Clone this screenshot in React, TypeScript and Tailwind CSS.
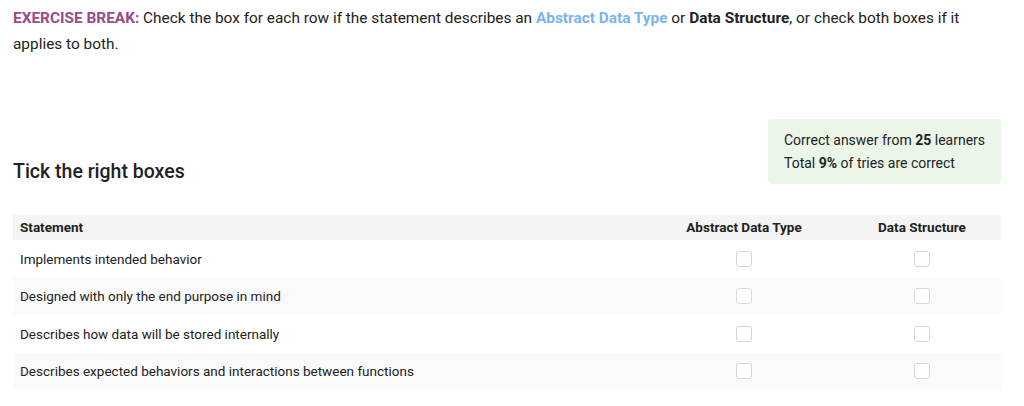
import React from "react";

const rows = [
  "Implements intended behavior",
  "Designed with only the end purpose in mind",
  "Describes how data will be stored internally",
  "Describes expected behaviors and interactions between functions",
];

function Box() {
  return <div className="w-4 h-4 rounded-[3px] border border-[#d6d6d6] bg-white" />;
}

export default function App() {
  return (
    <div className="w-[1024px] h-[406px] bg-white text-[#222] px-[13px] pt-[5px]" style={{ fontFamily: "Roboto, 'Noto Sans', sans-serif" }}>
      <p className="text-[15.4px] leading-[26px] w-[988px] pr-[20px]">
        <span className="font-bold text-[#9a4b8c]">EXERCISE BREAK:</span> Check the box for each row if the statement describes an{" "}
        <span className="font-bold text-[#7ab4f0]">Abstract Data Type</span> or <span className="font-bold">Data Structure</span>, or check both boxes if it applies to both.
      </p>
      <div className="mt-[62px] w-[988px] flex items-end justify-between">
        <h2 className="text-[19.5px] leading-[24px] font-medium">Tick the right boxes</h2>
        <div className="w-[233px] h-[65px] rounded-[4px] bg-[#ebf6e9] pl-4 pt-[10px] text-[14px] leading-[23px]">
          <div>Correct answer from <b>25</b> learners</div>
          <div>Total <b>9%</b> of tries are correct</div>
        </div>
      </div>
      <div className="mt-[31px] w-[988px] text-[13.5px]">
        <div className="grid grid-cols-[1fr_198px_158px] h-[25px] items-center bg-[#f4f4f4] font-bold">
          <div className="pl-[7px]">Statement</div>
          <div className="text-center">Abstract Data Type</div>
          <div className="text-center">Data Structure</div>
        </div>
        {rows.map((r, i) => (
          <div key={i} className={"grid grid-cols-[1fr_198px_158px] h-[37.5px] items-center " + (i % 2 === 1 ? "bg-[#fafafa]" : "bg-white")}>
            <div className="pl-[7px]">{r}</div>
            <div className="flex justify-center"><Box /></div>
            <div className="flex justify-center"><Box /></div>
          </div>
        ))}
      </div>
    </div>
  );
}
